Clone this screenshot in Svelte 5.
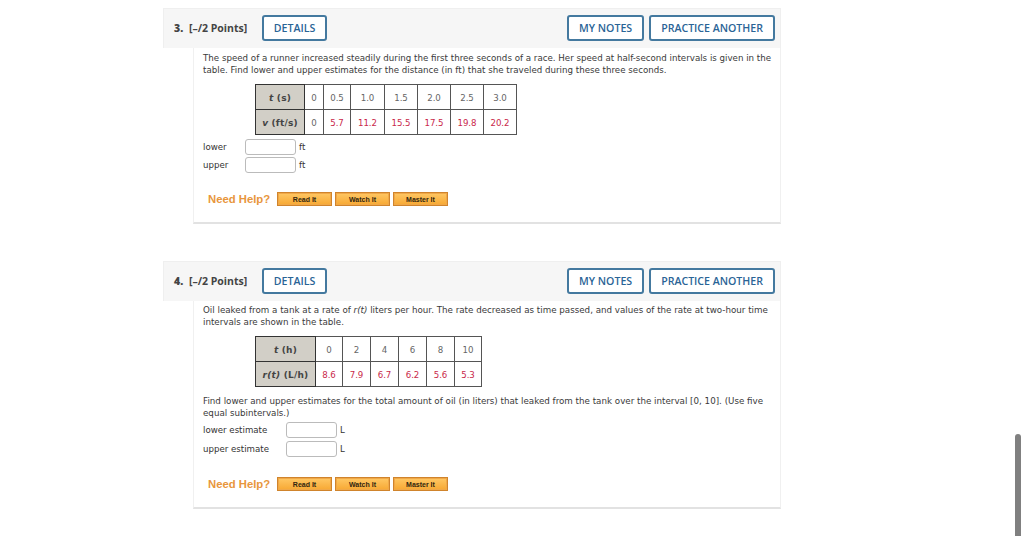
<script>
  const help = ['Read It', 'Watch It', 'Master It'];

  const runnerWidths = [49, 19, 27, 34, 33, 33, 33, 33];
  const runnerT = ['0', '0.5', '1.0', '1.5', '2.0', '2.5', '3.0'];
  const runnerV = ['5.7', '11.2', '15.5', '17.5', '19.8', '20.2'];

  const oilWidths = [60, 27, 28, 28, 28, 28, 27];
  const oilT = ['0', '2', '4', '6', '8', '10'];
  const oilR = ['8.6', '7.9', '6.7', '6.2', '5.6', '5.3'];
</script>

{#snippet header(num)}
  <div class="head">
    <span class="points"><b class="num">{num}.</b> [–/2 Points]</span>
    <button class="action details">DETAILS</button>
    <span class="spacer"></span>
    <button class="action">MY NOTES</button>
    <button class="action">PRACTICE ANOTHER</button>
  </div>
{/snippet}

{#snippet needHelp()}
  <div class="help">
    <span class="help-label">Need Help?</span>
    {#each help as label}
      <button class="help-btn">{label}</button>
    {/each}
  </div>
{/snippet}

{#snippet answer(label, unit, cls)}
  <div class="answer">
    <span class="answer-label {cls}">{label}</span>
    <span class="input"></span>
    <span class="unit">{unit}</span>
  </div>
{/snippet}

<div class="page">
  <section class="question q3">
    {@render header(3)}
    <div class="body">
      <p>The speed of a runner increased steadily during the first three seconds of a race. Her speed at half-second intervals is given in the table. Find lower and upper estimates for the distance (in ft) that she traveled during these three seconds.</p>
      <table class="runner">
        <colgroup>
          {#each runnerWidths as w}<col style="width: {w}px" />{/each}
        </colgroup>
        <tbody>
          <tr>
            <th><i>t</i> (s)</th>
            {#each runnerT as v}<td>{v}</td>{/each}
          </tr>
          <tr>
            <th><i>v</i> (ft/s)</th>
            <td>0</td>
            {#each runnerV as v}<td class="red">{v}</td>{/each}
          </tr>
        </tbody>
      </table>
      <div class="answers">
        {@render answer('lower', 'ft', 'short')}
        {@render answer('upper', 'ft', 'short')}
      </div>
      {@render needHelp()}
    </div>
  </section>

  <section class="question q4">
    {@render header(4)}
    <div class="body">
      <p>Oil leaked from a tank at a rate of <i>r(t)</i> liters per hour. The rate decreased as time passed, and values of the rate at two-hour time intervals are shown in the table.</p>
      <table class="oil">
        <colgroup>
          {#each oilWidths as w}<col style="width: {w}px" />{/each}
        </colgroup>
        <tbody>
          <tr>
            <th><i>t</i> (h)</th>
            {#each oilT as v}<td>{v}</td>{/each}
          </tr>
          <tr>
            <th><i>r(t)</i> (L/h)</th>
            {#each oilR as v}<td class="red">{v}</td>{/each}
          </tr>
        </tbody>
      </table>
      <p class="find">Find lower and upper estimates for the total amount of oil (in liters) that leaked from the tank over the interval [0, 10]. (Use five equal subintervals.)</p>
      <div class="answers">
        {@render answer('lower estimate', 'L', 'long')}
        {@render answer('upper estimate', 'L', 'long')}
      </div>
      {@render needHelp()}
    </div>
  </section>
</div>

<div class="scrollbar"></div>

<style>
  :global(body) {
    margin: 0;
    background: #fff;
    overflow: hidden;
  }

  .page {
    width: 618px;
    margin-left: 163px;
    padding-top: 8px;
    font-family: "DejaVu Sans", Verdana, sans-serif;
    font-size: 8.65px;
    color: #333;
  }

  .q4 {
    margin-top: 37px;
  }

  .head {
    display: flex;
    align-items: center;
    gap: 5px;
    height: 40px;
    padding: 0 5px 2px 10px;
    background: #f6f6f6;
    border: 1px solid #efefef;
    border-bottom: 0;
    box-sizing: border-box;
  }

  .points {
    font-family: "Open Sans", sans-serif;
    font-size: 10.5px;
    font-weight: 700;
    color: #444;
    width: 83px;
    white-space: nowrap;
  }

  .num {
    margin-right: 3px;
  }

  .spacer {
    flex: 1;
  }

  .action {
    height: 26px;
    padding: 0 10px;
    background: #fff;
    border: 2px solid #44799f;
    border-radius: 3px;
    font-family: "Open Sans", sans-serif;
    font-size: 10.6px;
    font-weight: 600;
    color: #2a6496;
    white-space: nowrap;
  }

  .details {
    width: 65px;
    padding: 0;
  }

  .body {
    margin-left: 30px;
    padding: 4px 4px 15px 9px;
    border-left: 1px solid #f0f0f0;
    border-right: 1px solid #f0f0f0;
    border-bottom: 2px solid #e2e2e2;
  }

  .q3 .answers {
    gap: 0;
  }

  .q3 .help {
    margin-top: 17px;
  }

  .q4 .body {
    padding-top: 3px;
  }

  .q4 .answers {
    margin-top: 2px;
  }

  .q4 .help {
    margin-top: 18px;
  }

  p {
    margin: 0;
    font-size: 8.72px;
    line-height: 12px;
    color: #3a3a3a;
  }

  .q3 p {
    font-size: 8.68px;
  }

  table {
    margin: 8px 0 0 52px;
    border-collapse: collapse;
    table-layout: fixed;
    width: 262px;
    border: 1px solid #333;
    color: #666;
    text-align: center;
  }

  table.oil {
    width: 226px;
  }

  th,
  td {
    box-sizing: border-box;
    height: 25px;
    padding: 2px 0 0;
    border: 1px solid #333;
    font-size: 8.65px;
    font-weight: 400;
  }

  td {
    border-color: #555;
  }

  th {
    background: #d2cfc7;
    font-size: 9px;
    font-weight: 700;
    color: #444;
    letter-spacing: 0.2px;
  }

  .red {
    color: #c9284a;
  }

  .find {
    margin-top: 8px;
  }

  .answers {
    display: flex;
    flex-direction: column;
    gap: 1px;
    margin-top: 3px;
  }

  .answer {
    display: flex;
    align-items: center;
    height: 18px;
  }

  .answer-label.short {
    width: 42px;
  }

  .answer-label.long {
    width: 83px;
  }

  .input {
    width: 49px;
    height: 14px;
    background: #fff;
    border: 1px solid #bbb;
    border-radius: 3px;
  }

  .unit {
    margin-left: 3px;
  }

  .help {
    display: flex;
    align-items: center;
    gap: 3px;
    margin: 16px 0 0 5px;
    height: 16px;
  }

  .help-label {
    width: 66px;
    font-family: "Liberation Sans", Arial, sans-serif;
    font-size: 11.3px;
    font-weight: 700;
    color: #e8963c;
    white-space: nowrap;
  }

  .help-btn {
    box-sizing: border-box;
    width: 55px;
    height: 14px;
    padding: 0;
    background: linear-gradient(#ffc865, #f7a833);
    border: 1px solid #d0842c;
    box-shadow: inset 0 0 0 1px #f0a848;
    font-family: "Liberation Sans", Arial, sans-serif;
    font-size: 7px;
    font-weight: 700;
    color: #33260f;
  }

  .scrollbar {
    position: fixed;
    left: 1015px;
    top: 434px;
    width: 6px;
    height: 102px;
    background: #808080;
    border-radius: 3px 3px 0 0;
  }
</style>
